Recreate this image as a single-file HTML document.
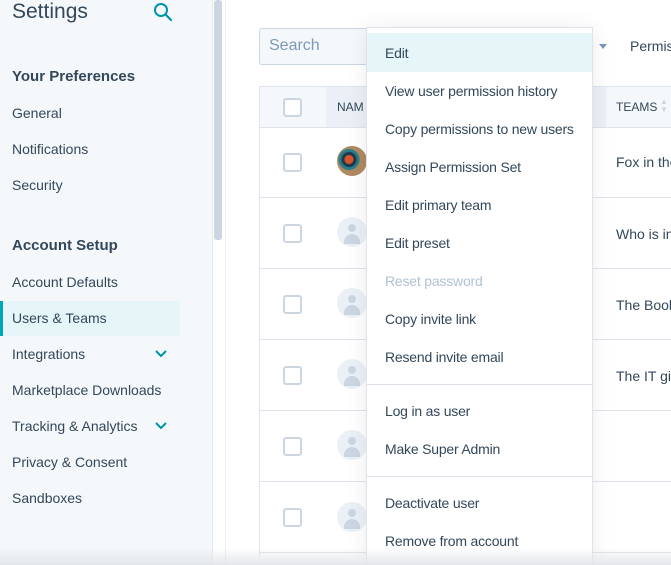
<!DOCTYPE html>
<html style="overflow:hidden;width:671px;height:565px"><head><style>
*{margin:0;padding:0;box-sizing:border-box}
body{width:671px;height:565px;overflow:hidden;background:#fff;font-family:"Liberation Sans",sans-serif;color:#33475b;position:relative}
.abs{position:absolute}
.sb{left:0;top:0;width:212px;height:565px;background:#f5f8fa}
.sbi{position:absolute;left:12px;font-size:14px;color:#33475b;line-height:18px;white-space:nowrap}
.h{font-weight:bold;font-size:15px}
.cb{position:absolute;width:19px;height:19px;border:2px solid #cbd6e2;border-radius:3px;background:#fff}
.row{position:absolute;left:259px;width:420px;border-bottom:1px solid #dfe3eb;height:71px}
.av{position:absolute;left:337px;width:30px;height:30px;border-radius:50%;background:#eaf0f6;overflow:hidden}
.av:before{content:"";position:absolute;left:11px;top:7px;width:8px;height:8px;border-radius:50%;background:#cbd6e2}
.av:after{content:"";position:absolute;left:7px;top:17px;width:16px;height:10px;border-radius:8px 8px 0 0;background:#cbd6e2}
.menu{left:366px;top:27px;width:227px;height:538px;background:#fff;border:1px solid #dfe3eb;border-bottom:none;box-shadow:0 1px 20px rgba(0,0,0,.08);overflow:hidden}
.mi{position:absolute;left:18px;font-size:14px;line-height:18px;color:#33475b;white-space:nowrap;letter-spacing:-0.2px}
.tm{position:absolute;left:616px;font-size:14px;color:#33475b;white-space:nowrap}
</style></head><body>
<div class="abs sb"></div>
<div class="abs" style="left:214px;top:0;width:8px;height:240px;background:#cbd6e2;border-radius:3px"></div>
<div class="abs" style="left:212px;top:0;width:1px;height:565px;background:#e5e9ee"></div>
<div class="abs" style="left:225px;top:0;width:1px;height:565px;background:#eaf0f6"></div>
<div class="sbi" style="top:0;font-size:21px;line-height:24px">Settings</div>
<svg class="abs" style="left:153px;top:2px" width="20" height="20" viewBox="0 0 20 20"><circle cx="8" cy="8" r="6" fill="none" stroke="#0091ae" stroke-width="2"/><path d="M12.5 12.5L18 18" stroke="#0091ae" stroke-width="2.2" stroke-linecap="round"/></svg>
<div class="sbi h" style="top:68px">Your Preferences</div>
<div class="sbi" style="top:104px">General</div>
<div class="sbi" style="top:140px">Notifications</div>
<div class="sbi" style="top:176px">Security</div>
<div class="sbi h" style="top:237px">Account Setup</div>
<div class="sbi" style="top:273px">Account Defaults</div>
<div class="abs" style="left:0;top:301px;width:180px;height:35px;background:#e5f5f8;border-left:3px solid #00a4bd"></div>
<div class="sbi" style="top:309px">Users &amp; Teams</div>
<div class="sbi" style="top:345px">Integrations</div>
<div class="sbi" style="top:381px">Marketplace Downloads</div>
<div class="sbi" style="top:417px">Tracking &amp; Analytics</div>
<div class="sbi" style="top:453px">Privacy &amp; Consent</div>
<div class="sbi" style="top:489px">Sandboxes</div>
<svg class="abs" style="left:154px;top:349px" width="14" height="10"><path d="M2 2l5 5 5-5" fill="none" stroke="#0091ae" stroke-width="2"/></svg>
<svg class="abs" style="left:154px;top:421px" width="14" height="10"><path d="M2 2l5 5 5-5" fill="none" stroke="#0091ae" stroke-width="2"/></svg>

<div class="abs" style="left:259px;top:28px;width:120px;height:37px;background:#f5f8fa;border:1px solid #cbd6e2;border-radius:3px"></div>
<div class="abs" style="left:269px;top:37px;font-size:16px;color:#7c98b6">Search</div>
<div class="abs" style="left:599px;top:44px;width:0;height:0;border-left:4px solid transparent;border-right:4px solid transparent;border-top:5px solid #7c98b6"></div>
<div class="abs" style="left:630px;top:38px;font-size:14px;white-space:nowrap">Permis</div>

<div class="abs" style="left:259px;top:86px;width:420px;height:42px;background:#f5f8fa;border:1px solid #dfe3eb"></div>
<div class="abs" style="left:326px;top:87px;width:280px;height:40px;background:#eaf0f6"></div>
<div class="abs" style="left:337px;top:100px;font-size:12px">NAM</div>
<div class="abs" style="left:616px;top:100px;font-size:12px">TEAMS</div>
<div class="abs" style="left:660px;top:98px;font-size:8px;color:#cbd6e2;line-height:8px">▲<br>▼</div>
<div class="cb" style="left:283px;top:98px"></div>

<div class="row" style="top:127px"></div><div class="cb" style="left:283px;top:153px"></div>
<div class="abs" style="left:337px;top:146px;width:30px;height:30px;border-radius:50%;background:radial-gradient(circle at 40% 45%,#d9542c 0 4px,#1d3a4a 5px 7px,#2a7d8a 8px 10px,#b08a60 11px)"></div>
<div class="row" style="top:198px"></div><div class="cb" style="left:283px;top:224px"></div><div class="av" style="top:217px"></div>
<div class="row" style="top:269px"></div><div class="cb" style="left:283px;top:295px"></div><div class="av" style="top:288px"></div>
<div class="row" style="top:340px"></div><div class="cb" style="left:283px;top:366px"></div><div class="av" style="top:359px"></div>
<div class="row" style="top:411px"></div><div class="cb" style="left:283px;top:437px"></div><div class="av" style="top:430px"></div>
<div class="row" style="top:482px"></div><div class="cb" style="left:283px;top:508px"></div><div class="av" style="top:502px"></div>
<div class="abs" style="left:259px;top:127px;width:1px;height:430px;background:#dfe3eb"></div>
<div class="tm" style="top:154px">Fox in the</div>
<div class="tm" style="top:226px">Who is in</div>
<div class="tm" style="top:297px">The Book</div>
<div class="tm" style="top:368px">The IT gir</div>

<div class="abs menu">
<div class="abs" style="left:0;top:5px;width:225px;height:39px;background:#e5f5f8"></div>
<div class="mi" style="top:16px">Edit</div>
<div class="mi" style="top:54px">View user permission history</div>
<div class="mi" style="top:92px">Copy permissions to new users</div>
<div class="mi" style="top:130px">Assign Permission Set</div>
<div class="mi" style="top:168px">Edit primary team</div>
<div class="mi" style="top:206px">Edit preset</div>
<div class="mi" style="top:244px;color:#b0c1d4">Reset password</div>
<div class="mi" style="top:282px">Copy invite link</div>
<div class="mi" style="top:320px">Resend invite email</div>
<div class="abs" style="left:0;top:356px;width:225px;height:1px;background:#dfe3eb"></div>
<div class="mi" style="top:374px">Log in as user</div>
<div class="mi" style="top:412px">Make Super Admin</div>
<div class="abs" style="left:0;top:448px;width:225px;height:1px;background:#dfe3eb"></div>
<div class="mi" style="top:466px">Deactivate user</div>
<div class="mi" style="top:504px">Remove from account</div>
</div>
<div class="abs" style="left:0;top:548px;width:671px;height:17px;background:linear-gradient(rgba(240,242,245,0),rgba(225,228,232,.9))"></div>
</body></html>
